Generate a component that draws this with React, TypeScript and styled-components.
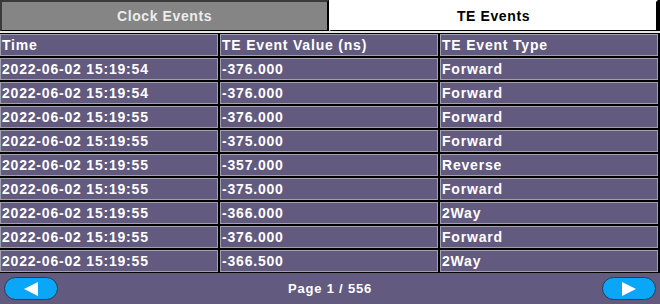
import React from "react";
import styled, { createGlobalStyle } from "styled-components";

const GlobalStyle = createGlobalStyle`
  html, body {
    margin: 0;
    padding: 0;
    background: #000;
  }
  * {
    box-sizing: border-box;
  }
`;

type EventRow = {
  time: string;
  value: string;
  type: string;
};

const rows: EventRow[] = [
  { time: "2022-06-02 15:19:54", value: "-376.000", type: "Forward" },
  { time: "2022-06-02 15:19:54", value: "-376.000", type: "Forward" },
  { time: "2022-06-02 15:19:55", value: "-376.000", type: "Forward" },
  { time: "2022-06-02 15:19:55", value: "-375.000", type: "Forward" },
  { time: "2022-06-02 15:19:55", value: "-357.000", type: "Reverse" },
  { time: "2022-06-02 15:19:55", value: "-375.000", type: "Forward" },
  { time: "2022-06-02 15:19:55", value: "-366.000", type: "2Way" },
  { time: "2022-06-02 15:19:55", value: "-376.000", type: "Forward" },
  { time: "2022-06-02 15:19:55", value: "-366.500", type: "2Way" },
];

const Arrow: React.FC<{ dir: "left" | "right" }> = ({ dir }) => (
  <svg width="16" height="14" viewBox="0 0 16 14">
    {dir === "left" ? (
      <polygon points="15,0 15,14 1,7" fill="#fff" />
    ) : (
      <polygon points="1,0 1,14 15,7" fill="#fff" />
    )}
  </svg>
);

const App: React.FC = () => {
  return (
    <>
      <GlobalStyle />
      <Screen>
        <TabBar>
          <Tab $active={false}>Clock Events</Tab>
          <Tab $active>TE Events</Tab>
        </TabBar>
        <Divider />
        <Table>
          <Cell>Time</Cell>
          <Cell>TE Event Value (ns)</Cell>
          <Cell>TE Event Type</Cell>
          {rows.map((r, i) => (
            <React.Fragment key={i}>
              <Cell>{r.time}</Cell>
              <Cell>{r.value}</Cell>
              <Cell>{r.type}</Cell>
            </React.Fragment>
          ))}
        </Table>
        <Footer>
          <NavButton aria-label="previous">
            <Arrow dir="left" />
          </NavButton>
          <PageLabel>Page 1 / 556</PageLabel>
          <NavButton aria-label="next">
            <Arrow dir="right" />
          </NavButton>
        </Footer>
      </Screen>
    </>
  );
};

export default App;

const Screen = styled.div`
  width: 660px;
  height: 304px;
  display: flex;
  flex-direction: column;
  background: #000;
  font-family: "Liberation Sans", Arial, sans-serif;
  overflow: hidden;
`;

const TabBar = styled.div`
  display: flex;
  height: 31px;
  background: #000;
`;

const Tab = styled.div<{ $active: boolean }>`
  flex: 1;
  display: flex;
  align-items: center;
  justify-content: center;
  font-size: 14px;
  font-weight: bold;
  letter-spacing: 0.6px;
  color: ${(p) => (p.$active ? "#000" : "#ececec")};
  background: ${(p) => (p.$active ? "#fff" : "#858585")};
  border: 2px solid ${(p) => (p.$active ? "#fff" : "#3a3a3a")};
  border-right: 2px solid #000;
  border-bottom: 1px solid #000;
  margin-right: ${(p) => (p.$active ? "2px" : "0")};
`;

const Divider = styled.div`
  height: 2px;
  background: #e8e8e8;
`;

const Table = styled.div`
  display: grid;
  grid-template-columns: repeat(3, 218px);
  grid-auto-rows: 22px;
  column-gap: 2px;
  row-gap: 2px;
  padding-top: 1px;
  background: #000;
`;

const Cell = styled.div`
  display: flex;
  align-items: center;
  padding-left: 1px;
  background: #625a7f;
  border: 1px solid #a3a0ad;
  color: #fff;
  font-size: 14px;
  font-weight: bold;
  letter-spacing: 0.8px;
  white-space: nowrap;
  overflow: hidden;
`;

const Footer = styled.div`
  flex: 1;
  margin-top: 1px;
  display: flex;
  align-items: center;
  justify-content: space-between;
  padding: 0 4px 0 4px;
  background: #625a7f;
`;

const NavButton = styled.button`
  width: 54px;
  height: 23px;
  border-radius: 12px;
  border: 1px solid #2c3a55;
  background: #0aa6f7;
  display: flex;
  align-items: center;
  justify-content: center;
  padding: 0;
  cursor: pointer;
`;

const PageLabel = styled.span`
  color: #fff;
  font-size: 13px;
  font-weight: bold;
  letter-spacing: 0.8px;
`;
